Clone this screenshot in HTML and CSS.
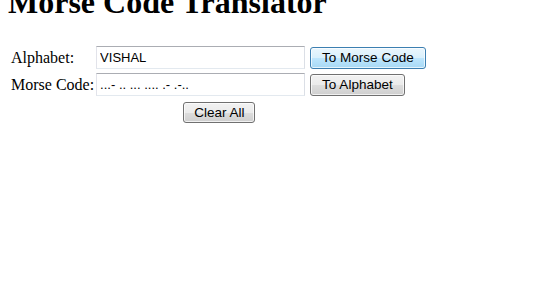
FILE: index.html
```html
<!DOCTYPE html>
<html>
<head>
<meta charset="utf-8">
<link rel="stylesheet" href="styles.css">
</head>
<body>
<h1 class="title">Morse Code Translator</h1>
<table class="form">
  <tr>
    <td class="label">Alphabet:</td>
    <td class="input-cell"><input class="field" type="text" value="VISHAL"></td>
    <td><button class="btn btn-focus">To Morse Code</button></td>
  </tr>
  <tr>
    <td class="label">Morse Code:</td>
    <td class="input-cell"><input class="field" type="text" value="...- .. ... .... .- .-.."></td>
    <td><button class="btn">To Alphabet</button></td>
  </tr>
  <tr>
    <td colspan="3" class="center"><button class="btn btn-clear">Clear All</button></td>
  </tr>
</table>
</body>
</html>
```

FILE: styles.css
```css
html, body {
  margin: 0;
  padding: 0;
  background: #fff;
}
body {
  padding: 0 8px;
  font-family: "Liberation Serif", "Times New Roman", serif;
  font-size: 16px;
  color: #000;
}
.title {
  font-family: "Liberation Serif", "Times New Roman", serif;
  font-size: 32px;
  font-weight: bold;
  margin: -16px 0 0 0;
  line-height: 37px;
}
.form {
  margin-top: 22px;
  border-collapse: separate;
  border-spacing: 2px;
}
.form td {
  padding: 1px;
  vertical-align: middle;
}
.label {
  white-space: nowrap;
}
.form td.label {
  padding-right: 0;
}
.form td.input-cell {
  padding-left: 0;
  padding-right: 2px;
}
.center {
  text-align: center;
}
.form td.center {
  padding-top: 3px;
  padding-left: 3px;
}
.field {
  box-sizing: border-box;
  width: 209px;
  height: 23px;
  margin: 0;
  padding: 1px 3px;
  border: 1px solid #d5d5d5;
  border-top-color: #abadb3;
  border-left-color: #e2e3ea;
  border-right-color: #dbdfe6;
  border-bottom-color: #e3e9ef;
  font-family: "Liberation Sans", Arial, sans-serif;
  font-size: 13px;
  color: #000;
  background: #fff;
}
.btn {
  box-sizing: border-box;
  height: 22px;
  margin: 0;
  padding: 0 11px;
  border: 1px solid #707070;
  border-radius: 3px;
  background: linear-gradient(#f2f2f2 0%, #ebebeb 50%, #dddddd 51%, #cfcfcf 100%);
  font-family: "Liberation Sans", Arial, sans-serif;
  font-size: 13.5px;
  color: #000;
  box-shadow: inset 0 0 0 1px rgba(255,255,255,0.7);
}
.btn-clear {
  height: 21px;
  padding: 0 10px;
}
.btn-focus {
  border-color: #3c7fb1;
  background: linear-gradient(#eaf6fd 0%, #d9f0fc 50%, #bee6fd 51%, #a7d9f5 100%);
}
```
